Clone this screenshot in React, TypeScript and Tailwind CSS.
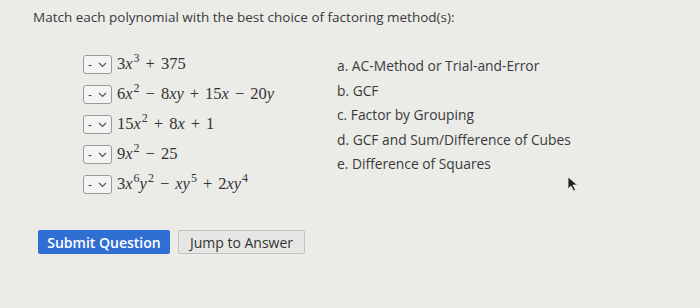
import React from "react";

const V = ({ children }: { children: React.ReactNode }) => (
  <span className="italic">{children}</span>
);
const Sup = ({ children }: { children: React.ReactNode }) => (
  <span className="text-[12px] relative -top-[7px] ml-[1px]">{children}</span>
);
const Op = ({ children }: { children: React.ReactNode }) => (
  <span className="mx-[6px]">{children}</span>
);

const Select = () => (
  <div className="w-[29px] h-[19px] border border-[#9a9a9a] rounded-[3px] bg-[#f4f4f2] flex items-center justify-between px-[4px] shrink-0">
    <span className="text-[12px] leading-none text-[#444] font-['Liberation_Sans',sans-serif]">-</span>
    <svg width="9" height="6" viewBox="0 0 9 6" fill="none">
      <path d="M1 1L4.5 4.5L8 1" stroke="#555" strokeWidth="1.2" />
    </svg>
  </div>
);

const rows: React.ReactNode[] = [
  <>3<V>x</V><Sup>3</Sup><Op>+</Op>375</>,
  <>6<V>x</V><Sup>2</Sup><Op>−</Op>8<V>xy</V><Op>+</Op>15<V>x</V><Op>−</Op>20<V>y</V></>,
  <>15<V>x</V><Sup>2</Sup><Op>+</Op>8<V>x</V><Op>+</Op>1</>,
  <>9<V>x</V><Sup>2</Sup><Op>−</Op>25</>,
  <>3<V>x</V><Sup>6</Sup><V>y</V><Sup>2</Sup><Op>−</Op><V>xy</V><Sup>5</Sup><Op>+</Op>2<V>xy</V><Sup>4</Sup></>,
];

const options = [
  "a. AC-Method or Trial-and-Error",
  "b. GCF",
  "c. Factor by Grouping",
  "d. GCF and Sum/Difference of Cubes",
  "e. Difference of Squares",
];

export default function App() {
  return (
    <div className="w-[700px] h-[308px] bg-[#ebebe8] relative overflow-hidden font-['Open_Sans',sans-serif] text-[#333]">
      <div className="pt-[6px] pl-[33px] text-[13.5px] leading-[22px] text-[#3a3a3a]">
        Match each polynomial with the best choice of factoring method(s):
      </div>
      <div className="flex mt-[27px]">
        <div className="pl-[83px] w-[337px] flex flex-col gap-[11px]">
          {rows.map((r, i) => (
            <div key={i} className="flex items-center h-[19px]">
              <Select />
              <div className="ml-[5px] font-['Liberation_Serif',serif] text-[16.5px] text-[#333] whitespace-nowrap leading-none">
                {r}
              </div>
            </div>
          ))}
        </div>
        <div className="flex flex-col gap-[4.5px] mt-[1px] text-[13.8px] leading-[20px] text-[#3a3a3a]">
          {options.map((o) => (
            <div key={o}>{o}</div>
          ))}
        </div>
      </div>
      <div className="flex items-center gap-[8px] pl-[38px] mt-[36px]">
        <button className="h-[24px] w-[132px] bg-[#2f6fd3] text-white text-[14px] font-semibold rounded-[2px]">
          Submit Question
        </button>
        <button className="h-[24px] w-[127px] bg-[#e6e6e4] border border-[#c2c2c0] text-[#333] text-[14px] rounded-[2px]">
          Jump to Answer
        </button>
      </div>
      <svg className="absolute left-[567px] top-[176px]" width="12" height="16" viewBox="0 0 12 16">
        <path d="M1 1L1 13L4 10L6.5 15L8.5 14L6 9L10.5 9Z" fill="#222" stroke="#eee" strokeWidth="0.8" />
      </svg>
    </div>
  );
}
